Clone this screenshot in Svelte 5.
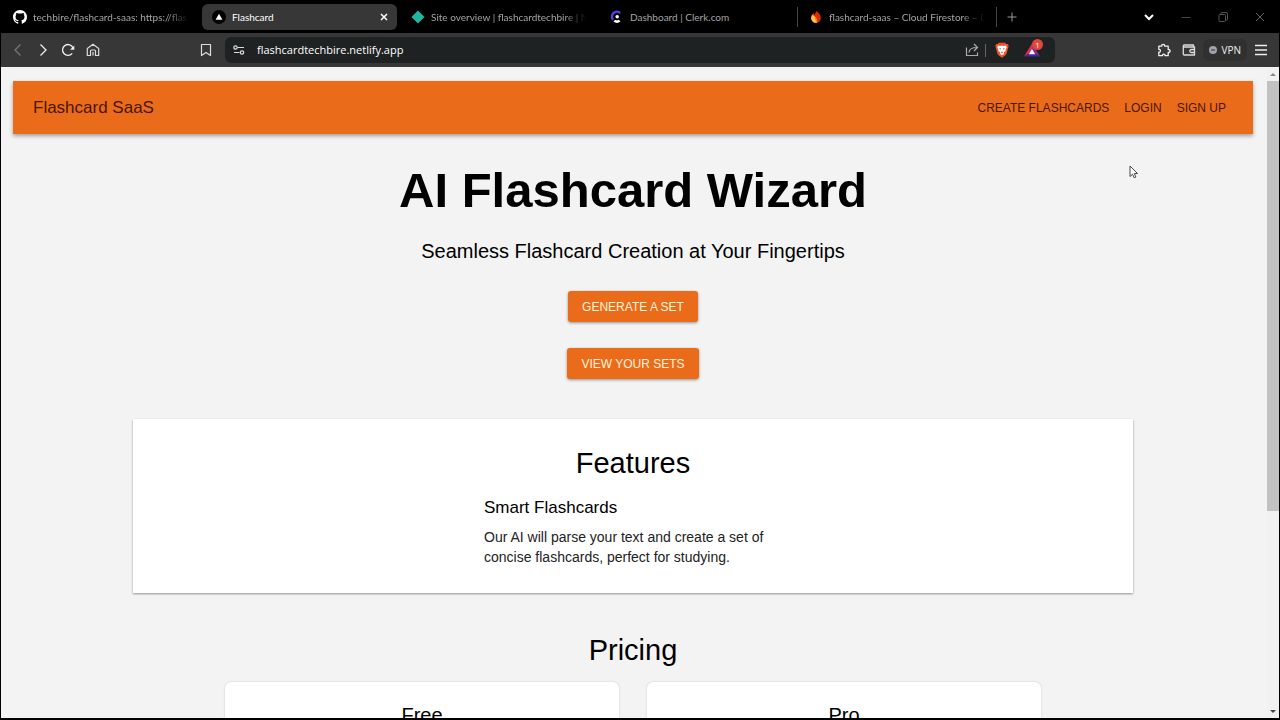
<script lang="ts">
interface Tab {
  icon: "github" | "vercel" | "netlify" | "clerk" | "firebase";
  title: string;
  faded?: boolean;
  divider?: boolean;
}

const TABS: Tab[] = [
  { icon: "github", title: "techbire/flashcard-saas: https://flas", faded: true },
  { icon: "vercel", title: "Flashcard" },
  { icon: "netlify", title: "Site overview | flashcardtechbire | N", faded: true },
  { icon: "clerk", title: "Dashboard | Clerk.com" },
  { icon: "firebase", title: "flashcard-saas – Cloud Firestore – D", faded: true, divider: true },
];

const PLANS = ["Free", "Pro"];

let active = $state(1);
let url = $state("flashcardtechbire.netlify.app");
</script>

<div class="window">
  <div class="tabstrip">
    <div class="tabs">
      {#each TABS as tab, i}
        <div class="tab" class:active={i === active} class:divider={tab.divider}>
          <button class="tab-btn" onclick={() => (active = i)}>
            <svg class="favicon" viewBox="0 0 16 16" aria-hidden="true">
              {#if tab.icon === "github"}
                <path
                  fill="#fff"
                  d="M8 0C3.58 0 0 3.58 0 8c0 3.54 2.29 6.53 5.47 7.59.4.07.55-.17.55-.38 0-.19-.01-.82-.01-1.49-2.01.37-2.53-.49-2.69-.94-.09-.23-.48-.94-.82-1.13-.28-.15-.68-.52-.01-.53.63-.01 1.08.58 1.23.82.72 1.21 1.87.87 2.33.66.07-.52.28-.87.51-1.07-1.78-.2-3.64-.89-3.64-3.95 0-.87.31-1.59.82-2.15-.08-.2-.36-1.02.08-2.12 0 0 .67-.21 2.2.82.64-.18 1.32-.27 2-.27s1.36.09 2 .27c1.53-1.04 2.2-.82 2.2-.82.44 1.1.16 1.92.08 2.12.51.56.82 1.27.82 2.15 0 3.07-1.87 3.75-3.65 3.95.29.25.54.73.54 1.48 0 1.07-.01 1.93-.01 2.2 0 .21.15.46.55.38A8.01 8.01 0 0 0 16 8c0-4.42-3.58-8-8-8z"
                />
              {:else if tab.icon === "vercel"}
                <circle cx="8" cy="8" r="8" fill="#000" />
                <path d="M8 4.3l3.9 6.7H4.1z" fill="#fff" />
              {:else if tab.icon === "netlify"}
                <path d="M8 .6L15.4 8 8 15.4.6 8z" fill="#1fb89f" />
              {:else if tab.icon === "clerk"}
                <path d="M11.6 3.4A5.600 5.600 0 0 0 3.600 11.200" fill="none" stroke="#5b3fe0" stroke-width="2.800" />
                <path d="M4 13.200a6.400 6.400 0 0 0 8 0l-2-2.200a3.600 3.600 0 0 1-4 0z" fill="#fff" />
                <circle cx="8.200" cy="7.800" r="2" fill="#fff" />
              {:else}
                <path d="M8.500 1c3 2.500 5 4.800 5 8.300a5.500 5.500 0 0 1-11 0c0-2.300 1-4.300 2.500-5.800l1.400 2C6.800 3.900 7.900 2.700 8.500 1z" fill="#dd2c00" />
                <path d="M3.600 5.300c3.400 1.400 5.500 4.500 5.700 9.300A5.500 5.500 0 0 1 2.500 9.300C2.500 7.800 2.900 6.500 3.600 5.300z" fill="#ffc24a" />
                <path d="M9.300 14.600c.5-2.200-.2-4.400-1.300-6.100l-1.500 1c1.200 1.500 1.500 3.500 1 5.300z" fill="#ff9100" />
              {/if}
            </svg>
            <span class="tab-title" class:faded={tab.faded}>{tab.title}</span>
          </button>
          {#if i === active}
            <button class="tab-close" aria-label="Close tab">
              <svg viewBox="0 0 8 8" width="8" height="8"><path d="M1 1l6 6M7 1L1 7" stroke="#fff" stroke-width="1.500" /></svg>
            </button>
          {/if}
        </div>
      {/each}
      <button class="new-tab" aria-label="New tab">
        <svg viewBox="0 0 10 10" width="10" height="10"><path d="M5 .5v9M.5 5h9" stroke="#999" /></svg>
      </button>
    </div>
    <div class="window-controls">
      <button aria-label="Search tabs">
        <svg viewBox="0 0 12 12"><path d="M2 4l4 4 4-4" stroke="#fff" stroke-width="2" /></svg>
      </button>
      <button aria-label="Minimize">
        <svg viewBox="0 0 12 12"><path d="M1.500 6.500h9" stroke="#444" /></svg>
      </button>
      <button aria-label="Restore">
        <svg viewBox="0 0 12 12"><path d="M2 4.500a1 1 0 0 1 1-1h4.500a1 1 0 0 1 1 1V9.500a1 1 0 0 1-1 1H3a1 1 0 0 1-1-1zM4 3V2.500a1 1 0 0 1 1-1h4a1.500 1.500 0 0 1 1.500 1.500v5a1 1 0 0 1-1 1H9" stroke="#555" /></svg>
      </button>
      <button aria-label="Close window">
        <svg viewBox="0 0 12 12"><path d="M2 2l8 8M10 2l-8 8" stroke="#666" /></svg>
      </button>
    </div>
  </div>

  <div class="toolbar">
    <div class="nav-buttons">
      <button aria-label="Back">
        <svg viewBox="0 0 14 14"><path d="M9.500 1.500L4 7l5.500 5.500" stroke="#777" stroke-width="1.300" /></svg>
      </button>
      <button aria-label="Forward">
        <svg viewBox="0 0 14 14"><path d="M4.500 1.500L10 7l-5.500 5.500" stroke="#eee" stroke-width="1.300" /></svg>
      </button>
      <button aria-label="Reload">
        <svg viewBox="0 0 14 14">
          <path d="M11.200 10.300A5.400 5.400 0 1 1 12 5" stroke="#eee" stroke-width="1.300" />
          <path d="M13.300 2.500v4.300H9z" fill="#eee" />
        </svg>
      </button>
      <button aria-label="Home">
        <svg viewBox="0 0 14 14"><path d="M1.300 5.500L7 1.300l5.700 4.200v7H9.500V8a1 1 0 0 0-1-1h-3a1 1 0 0 0-1 1v4.500H1.300zM7 9v3.500" stroke="#ddd" stroke-width="1.200" /></svg>
      </button>
    </div>
    <button class="bookmark" aria-label="Bookmark this page">
      <svg viewBox="0 0 14 14"><path d="M2.500 1.500h9v11L7 9.500l-4.500 3z" stroke="#ddd" stroke-width="1.200" stroke-linejoin="round" /></svg>
    </button>
    <div class="address">
      <button aria-label="Site information">
        <svg viewBox="0 0 14 14"><path d="M5.500 4.500h6.500M2 9.500h5.500" stroke="#ddd" stroke-width="1.200" /><circle cx="3.500" cy="4.500" r="1.700" stroke="#ddd" stroke-width="1.200" /><circle cx="10" cy="9.500" r="1.700" stroke="#ddd" stroke-width="1.200" /></svg>
      </button>
      <input aria-label="Address" bind:value={url} spellcheck="false" />
      <button aria-label="Share">
        <svg viewBox="0 0 14 14"><path d="M1.500 4.500v8h11V9.500M4 9.500c.3-3.500 2.500-5 8-5M9 1l3.500 3.500L9 8" stroke="#aaa" stroke-width="1.200" /></svg>
      </button>
      <span class="rule"></span>
      <button class="shield" aria-label="Brave Shields">
        <svg viewBox="0 0 14 16">
          <path d="M4 .8h6l1.300 1.200 1.500-.1.900 2-.5 1.500-1.500 6.200c-.5 1.600-2 2.300-4.700 4.100C4.300 13.900 2.800 13.200 2.300 11.600L.8 5.400.3 3.900l.9-2 1.500.1z" fill="#f1502b" />
          <path d="M3.200 3.500l2.300.4L7 3.500l1.500.4 2.300-.4 1 1.800-1.200 2.400.2 1.200-1.900 1.300L9 12l-2 1.300L5 12l.1-1.800-1.900-1.300.2-1.200-1.200-2.400z" fill="#fff" />
          <path d="M4 6l2.200.4-.6 1.300zM10 6l-2.200.4.600 1.300zM5.800 10.200L7 9.600l1.200.6L7 11.300z" fill="#f1502b" />
        </svg>
      </button>
      <button class="rewards" aria-label="Brave Rewards, 1 notification">
        <svg viewBox="0 0 16 14">
          <path d="M8 .5L0 13.500 8 9z" fill="#d9304f" />
          <path d="M8 .5l8 13L8 9z" fill="#8b2f86" />
          <path d="M0 13.500h16L8 9z" fill="#4424a8" />
          <path d="M8 6l3.200 5.200H4.800z" fill="#fff" />
        </svg>
        <span class="badge">1</span>
      </button>
    </div>
    <div class="actions">
      <button aria-label="Extensions">
        <svg viewBox="0 0 14 14"><path d="M1.800 3.200h3c-.6-2.500 3.400-2.500 2.800 0h3.600v3.300c2.500-.6 2.500 3.400 0 2.800v3.400H8c.5-2-3-2-2.500 0H1.800V9.200c2.200.4 2.200-3.200 0-2.800z" stroke="#eee" stroke-width="1.300" stroke-linejoin="round" /></svg>
      </button>
      <button aria-label="Wallet">
        <svg viewBox="0 0 14 14"><path d="M11.500 4V2H2.300a1 1 0 0 0 0 2h10.200v8H2.300a1 1 0 0 1-1-1V3M12.500 6.500H9.300a1.500 1.500 0 0 0 0 3h3.200" stroke="#ddd" stroke-width="1.300" stroke-linejoin="round" /></svg>
      </button>
      <button class="vpn">
        <svg viewBox="0 0 8 8" aria-hidden="true"><circle cx="4" cy="4" r="4" fill="#a0a0b0" /><path d="M2 4h4" stroke="#444" stroke-width="1.200" /></svg>
        VPN
      </button>
      <button aria-label="Menu">
        <svg viewBox="0 0 14 14"><path d="M1 2.500h12M1 7h12M1 11.500h12" stroke="#eee" stroke-width="1.300" /></svg>
      </button>
    </div>
  </div>

  <div class="viewport">
    <div class="page">
      <header class="appbar">
        <span class="brand">Flashcard SaaS</span>
        <nav>
          <a href="/generate">CREATE FLASHCARDS</a>
          <a href="/sign-in">LOGIN</a>
          <a href="/sign-up">SIGN UP</a>
        </nav>
      </header>

      <section class="hero">
        <h1>AI Flashcard Wizard</h1>
        <p>Seamless Flashcard Creation at Your Fingertips</p>
        <button>GENERATE A SET</button>
        <button>VIEW YOUR SETS</button>
      </section>

      <section class="features">
        <h2>Features</h2>
        <div class="feature">
          <h3>Smart Flashcards</h3>
          <p>Our AI will parse your text and create a set of concise flashcards, perfect for studying.</p>
        </div>
      </section>

      <section class="pricing">
        <h2>Pricing</h2>
        <div class="plans">
          {#each PLANS as plan}
            <div class="plan"><h3>{plan}</h3></div>
          {/each}
        </div>
      </section>
    </div>
    <div class="scrollbar" aria-hidden="true">
      <span class="arrow up"></span>
      <div class="track"><div class="thumb"></div></div>
      <span class="arrow down"></span>
    </div>
  </div>

  <svg class="cursor" viewBox="0 0 10 14" aria-hidden="true">
    <path d="M1 1v10.500l2.500-2.300 1.700 3.600 1.700-.8-1.600-3.500h3.200z" fill="#fff" stroke="#444" />
  </svg>
</div>

<style>
  :global(body) {
    background: #000;
    overflow: hidden;
  }
  .window {
    position: relative;
    display: flex;
    flex-direction: column;
    box-sizing: border-box;
    height: 100vh;
    padding: 0 1px 2px;
    background: #000;
    font-family: "Liberation Sans", Arial, sans-serif;
  }
  button {
    padding: 0;
    border: 0;
    background: none;
    color: inherit;
    font: inherit;
    cursor: pointer;
  }
  svg {
    display: block;
    fill: none;
  }
  h1,
  h2,
  h3,
  p {
    margin: 0;
    font-weight: 400;
  }

  /* browser chrome */
  .tabstrip,
  .toolbar {
    display: flex;
    align-items: center;
    flex-shrink: 0;
  }
  .tabstrip {
    height: 33px;
    color: #a4a4a4;
    font-family: Lato, "Open Sans", sans-serif;
    font-size: 10px;
  }
  .tabs {
    display: flex;
    flex: 1;
    gap: 4px;
    min-width: 0;
    padding-left: 2px;
  }
  .tab {
    position: relative;
    display: flex;
    align-items: center;
    flex: 0 1 195px;
    box-sizing: border-box;
    min-width: 0;
    height: 26px;
    padding: 0 9px 0 10px;
    border-radius: 6px;
  }
  .tab.active {
    background: #373737;
    color: #fff;
  }
  .tab.divider::before,
  .tab.divider::after {
    content: "";
    position: absolute;
    top: 3px;
    bottom: 3px;
    left: -2px;
    width: 1px;
    background: #444;
  }
  .tab.divider::after {
    right: -3px;
    left: auto;
  }
  .tab-btn {
    display: flex;
    align-items: center;
    flex: 1;
    gap: 6px;
    min-width: 0;
  }
  .favicon {
    width: 14px;
    height: 14px;
    flex-shrink: 0;
  }
  .tab-title {
    flex: 1;
    overflow: hidden;
    white-space: nowrap;
    text-align: left;
  }
  .tab-title.faded {
    mask-image: linear-gradient(to right, #000 85%, transparent);
  }
  .new-tab {
    padding: 0 9px;
  }
  .window-controls {
    display: flex;
    gap: 25px;
    padding-right: 13px;
  }
  .window-controls svg {
    width: 12px;
    height: 12px;
  }
  .toolbar {
    height: 34px;
    background: #373737;
    color: #eee;
    font-family: "Open Sans", "Noto Sans", sans-serif;
    font-size: 11px;
  }
  .toolbar svg {
    width: 14px;
    height: 14px;
  }
  .nav-buttons {
    display: flex;
    gap: 11px;
    padding-left: 10px;
  }
  .bookmark {
    margin: 0 12px 0 99px;
  }
  .address {
    display: flex;
    align-items: center;
    flex: 0 1 830px;
    box-sizing: border-box;
    min-width: 0;
    height: 26px;
    padding: 0 15px 0 7px;
    border-radius: 6px;
    background: #1f2223;
  }
  .address input {
    flex: 1;
    min-width: 0;
    padding: 0 11px 2px;
    border: 0;
    outline: 0;
    background: none;
    color: #fff;
    font: inherit;
  }
  .rule {
    width: 1px;
    height: 13px;
    margin: 0 9px 0 6px;
    background: #666;
  }
  .toolbar .shield svg {
    height: 16px;
  }
  .rewards {
    position: relative;
    margin-left: 15px;
  }
  .toolbar .rewards svg {
    width: 16px;
  }
  .badge {
    position: absolute;
    top: -4px;
    right: -3px;
    width: 11px;
    border-radius: 6px;
    background: #e3463c;
    color: #fff;
    font-size: 8px;
    line-height: 11px;
    text-align: center;
  }
  .actions {
    display: flex;
    align-items: center;
    gap: 11px;
    margin-left: auto;
    padding-right: 11px;
  }
  .vpn {
    display: flex;
    align-items: center;
    gap: 4px;
    height: 22px;
    margin: 0 -4px;
    padding: 0 6px;
    border-radius: 6px;
    background: #303030;
    font-size: 10px;
  }
  .toolbar .vpn svg {
    width: 8px;
    height: 8px;
  }

  /* web page */
  .viewport {
    display: flex;
    flex: 1;
    min-height: 0;
    background: #f3f3f3;
    color: #000;
  }
  .page {
    flex: 1;
    min-width: 0;
    overflow: hidden;
    padding: 14px 14px 0 12px;
  }
  .appbar {
    display: flex;
    align-items: center;
    justify-content: space-between;
    height: 53px;
    padding: 0 27px 0 20px;
    background: #ea6c1a;
    color: #4a1505;
    box-shadow: 0 2px 4px rgba(0, 0, 0, 0.35);
  }
  .brand {
    font-size: 17px;
  }
  nav {
    display: flex;
    gap: 15px;
    font-size: 12px;
  }
  nav a {
    color: inherit;
    text-decoration: none;
  }
  .hero {
    display: flex;
    flex-direction: column;
    align-items: center;
    padding: 26px 0 40px;
  }
  .hero h1 {
    font-size: 49px;
    font-weight: 700;
    line-height: 60px;
  }
  .hero p {
    margin: 17px 0 26px;
    font-size: 20px;
    line-height: 28px;
  }
  .hero button {
    height: 31px;
    padding: 0 14px;
    border-radius: 3px;
    background: #ea6c1a;
    box-shadow: 0 1px 3px rgba(0, 0, 0, 0.4);
    color: #fff3dc;
    font-size: 12px;
  }
  .hero button + button {
    margin-top: 26px;
  }
  h2 {
    font-size: 29px;
    line-height: 36px;
    text-align: center;
  }
  .features {
    max-width: 1000px;
    margin: 0 auto;
    padding: 26px 0;
    box-sizing: border-box;
    background: #fff;
    box-shadow: 0 1px 2px rgba(0, 0, 0, 0.4);
  }
  .feature {
    max-width: 298px;
    margin: 15px auto 0;
  }
  .feature h3 {
    font-size: 17px;
    line-height: 24px;
  }
  .feature p {
    margin-top: 7px;
    color: #222;
    font-size: 14px;
    line-height: 20px;
  }
  .pricing {
    padding-top: 39px;
  }
  .plans {
    display: grid;
    grid-template-columns: 1fr 1fr;
    gap: 28px;
    max-width: 816px;
    margin: 14px auto 0;
  }
  .plan {
    padding: 20px 0 80px;
    border-radius: 6px;
    background: #fff;
    box-shadow: 0 0 2px rgba(0, 0, 0, 0.2);
    text-align: center;
  }
  .plan h3 {
    font-size: 20px;
    line-height: 26px;
  }
  .scrollbar {
    display: flex;
    flex-direction: column;
    width: 12px;
    background: #f1f1f1;
  }
  .arrow {
    align-self: center;
    margin: 6px 0 5px;
    border: 3px solid transparent;
    border-top-width: 0;
    border-bottom: 3px solid #888;
  }
  .arrow.down {
    border-top: 3px solid #444;
    border-bottom-width: 0;
  }
  .track {
    flex: 1;
  }
  .thumb {
    height: 69%;
    background: #c1c1c1;
  }
  .cursor {
    position: absolute;
    top: 165px;
    left: 1129px;
    width: 10px;
    height: 14px;
  }
</style>
